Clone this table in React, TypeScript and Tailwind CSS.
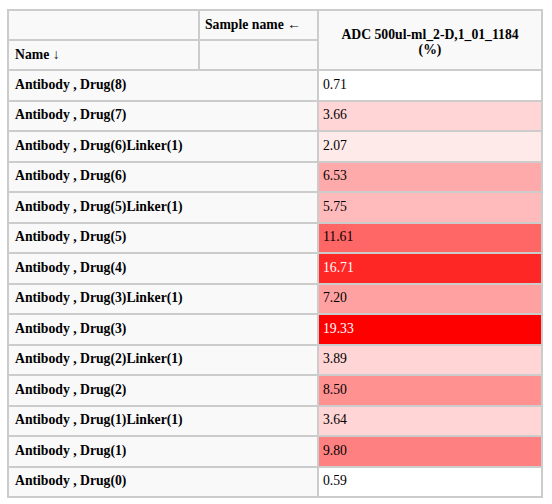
import React from 'react'

interface Row {
  name:   string
  value:  string
  bg:     string
  light?: boolean
}

const ROWS: Row[] = [
  { name: 'Antibody , Drug(8)',          value: '0.71',  bg: 'bg-white' },
  { name: 'Antibody , Drug(7)',          value: '3.66',  bg: 'bg-[#ffd5d5]' },
  { name: 'Antibody , Drug(6)Linker(1)', value: '2.07',  bg: 'bg-[#ffeaea]' },
  { name: 'Antibody , Drug(6)',          value: '6.53',  bg: 'bg-[#ffaaaa]' },
  { name: 'Antibody , Drug(5)Linker(1)', value: '5.75',  bg: 'bg-[#ffbbbb]' },
  { name: 'Antibody , Drug(5)',          value: '11.61', bg: 'bg-[#ff6666]' },
  { name: 'Antibody , Drug(4)',          value: '16.71', bg: 'bg-[#ff2626]', light: true },
  { name: 'Antibody , Drug(3)Linker(1)', value: '7.20',  bg: 'bg-[#ffa1a1]' },
  { name: 'Antibody , Drug(3)',          value: '19.33', bg: 'bg-[#ff0000]', light: true },
  { name: 'Antibody , Drug(2)Linker(1)', value: '3.89',  bg: 'bg-[#ffd5d5]' },
  { name: 'Antibody , Drug(2)',          value: '8.50',  bg: 'bg-[#ff9191]' },
  { name: 'Antibody , Drug(1)Linker(1)', value: '3.64',  bg: 'bg-[#ffd5d5]' },
  { name: 'Antibody , Drug(1)',          value: '9.80',  bg: 'bg-[#ff8080]' },
  { name: 'Antibody , Drug(0)',          value: '0.59',  bg: 'bg-white' },
]

export default function App() {
  return (
    <div className="pl-[7px] pt-[9px] bg-white min-h-screen font-['Liberation_Serif','Times_New_Roman',serif]">
      <table className="border-collapse w-[536px] text-[13.7px] text-black table-fixed font-['Liberation_Serif','Times_New_Roman',serif]">
        <colgroup>
          <col className="w-[191px]" />
          <col className="w-[119px]" />
          <col className="w-[224px]" />
        </colgroup>
        <thead>
          <tr className="h-[30px]">
            <th className="border-2 border-[#cccccc] bg-[#f9f9f9]" />
            <th className="border-2 border-[#cccccc] bg-[#f9f9f9] px-[5px] text-left font-bold align-middle">
              Sample name ←
            </th>
            <th rowSpan={2} className="border-2 border-[#cccccc] bg-[#f9f9f9] px-[5px] text-center font-bold leading-[15px] pt-[4px]">
              ADC 500ul-ml_2-D,1_01_1184
              <br />
              (%)
            </th>
          </tr>
          <tr className="h-[30px]">
            <th className="border-2 border-[#cccccc] bg-[#f9f9f9] px-[6px] text-left font-bold">Name ↓</th>
            <th className="border-2 border-[#cccccc] bg-[#f9f9f9]" />
          </tr>
        </thead>
        <tbody>
          {ROWS.map((r) => (
            <tr key={r.name} className="h-[30.5px]">
              <td colSpan={2} className="border-2 border-[#cccccc] bg-[#f9f9f9] px-[6px] font-bold">
                {r.name}
              </td>
              <td className={`border-2 border-[#cccccc] px-[4px] ${r.bg} ${r.light ? 'text-white' : 'text-black'}`}>
                {r.value}
              </td>
            </tr>
          ))}
        </tbody>
      </table>
    </div>
  )
}
